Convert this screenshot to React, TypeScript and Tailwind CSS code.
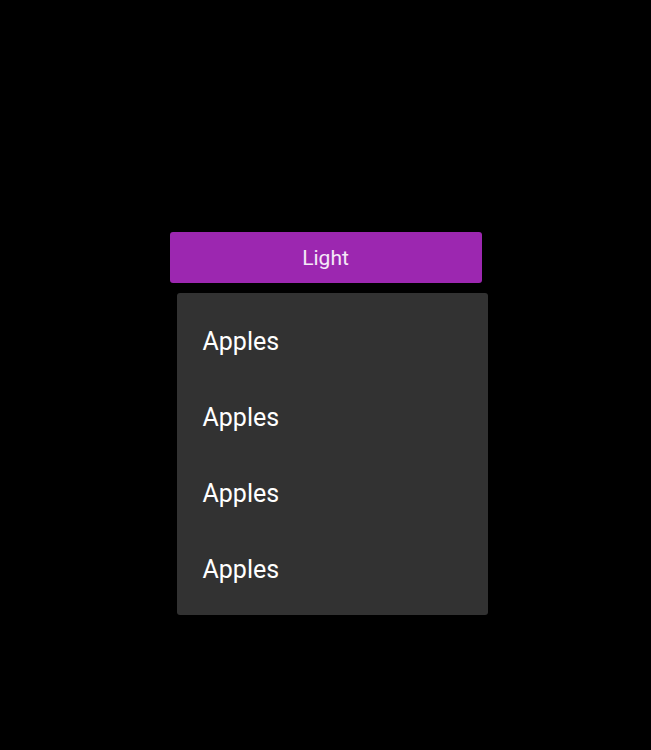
import React from 'react';

const items = ['Apples', 'Apples', 'Apples', 'Apples'];

const App: React.FC = () => {
  return (
    <div
      className="min-h-screen w-full bg-black pt-[232px] flex justify-center"
      style={{ fontFamily: 'Roboto, "Noto Sans", sans-serif' }}
    >
      <div className="relative w-[312px]">
        {/* Trigger button */}
        <button className="w-full h-[51px] pt-[2px] rounded-[3px] bg-[#9c27b0] text-[21px] text-white/90 flex items-center justify-center">
          Light
        </button>

        {/* Menu popover */}
        <div className="absolute top-[61px] left-[7px] w-[311px] rounded-[3px] bg-[#323232] pt-[11px] pb-[7px]">
          {items.map((label, i) => (
            <div key={i} className="h-[76px] flex items-center pl-[26px] text-[25px] text-white">
              {label}
            </div>
          ))}
        </div>
      </div>
    </div>
  );
};

export default App;
